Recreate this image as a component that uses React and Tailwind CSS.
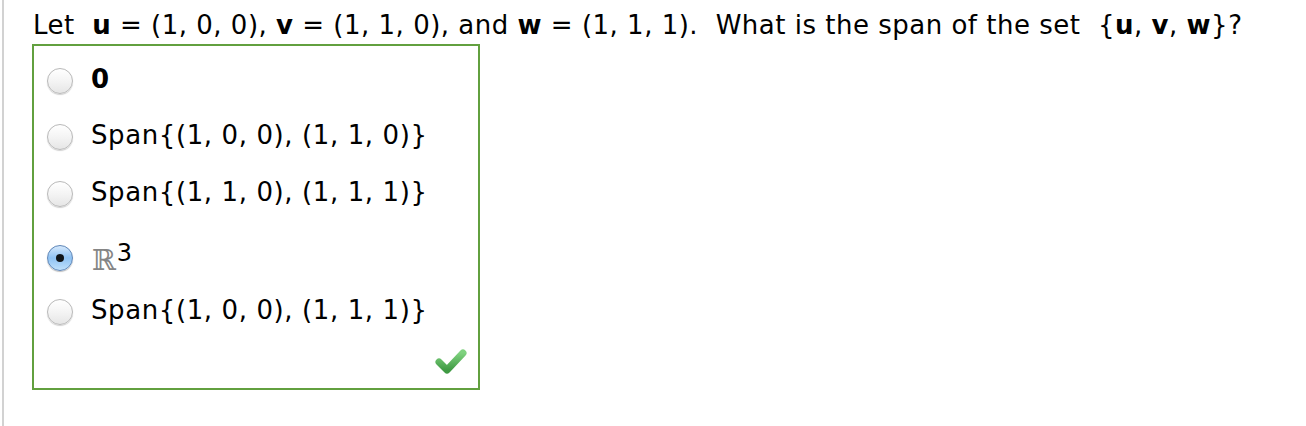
import React from "react";

const font = { fontFamily: '"DejaVu Sans", Verdana, sans-serif' };

function Radio({ checked }) {
  if (checked) {
    return (
      <span className="relative flex h-[26px] w-[26px] shrink-0 items-center justify-center rounded-full border border-[#5e86b8] bg-gradient-to-b from-[#d6e9fc] via-[#8fc2f3] to-[#bfe0fb] shadow-[0_1px_1px_rgba(0,0,0,0.25)]">
        <span className="h-[8px] w-[8px] rounded-full bg-[#101418]" />
      </span>
    );
  }
  return (
    <span className="h-[26px] w-[26px] shrink-0 rounded-full border border-[#b9b9b9] bg-gradient-to-b from-[#ffffff] via-[#f4f4f4] to-[#e6e6e6] shadow-[0_1px_1px_rgba(0,0,0,0.18)]" />
  );
}

function Option({ checked, children, className, textClass = "-mt-[4px]" }) {
  return (
    <div className={"flex items-center pl-[13px] " + className}>
      <Radio checked={checked} />
      <div className={"ml-[18px] text-[26px] leading-[30px] tracking-[0.6px] text-black whitespace-nowrap " + textClass}>{children}</div>
    </div>
  );
}

export default function App() {
  return (
    <div className="h-[426px] w-[1306px] bg-white" style={font}>
      <div className="ml-[2px] h-[426px] border-l-2 border-[#d2d2d2] pl-[28px]">
        <div className="pt-[8px] pl-[1px] text-[26px] leading-[34px] tracking-[0.5px] text-black whitespace-nowrap">
          Let&nbsp; <b>u</b> = (1, 0, 0), <b>v</b> = (1, 1, 0), and <b>w</b> = (1, 1, 1).&nbsp; What is the span of the set&nbsp; {"{"}<b>u</b>, <b>v</b>, <b>w</b>{"}"}?
        </div>
        <div className="mt-[2px] flex h-[346px] w-[448px] flex-col border-2 border-[#62a03f] pt-[7px]">
          <Option className="h-[56px]">
            <b>0</b>
          </Option>
          <Option className="h-[56px]">Span{"{"}(1, 0, 0), (1, 1, 0){"}"}</Option>
          <Option className="h-[57px]">Span{"{"}(1, 1, 0), (1, 1, 1){"}"}</Option>
          <Option checked className="h-[64px] pt-[8px]" textClass="mt-[6px]">
            <span className="ml-[1px] text-[29px] text-[#858585]" style={{ fontFamily: '"DejaVu Serif", serif' }}>ℝ</span>
            <span className="relative -top-[9px] text-[24px]">3</span>
          </Option>
          <Option className="h-[52px]">Span{"{"}(1, 0, 0), (1, 1, 1){"}"}</Option>
          <div className="mt-[9px] flex justify-end pr-[11px]">
            <svg width="32" height="28" viewBox="0 0 32 28">
              <defs>
                <linearGradient id="chk" x1="0" y1="0" x2="0" y2="1">
                  <stop offset="0" stopColor="#7fd27f" />
                  <stop offset="1" stopColor="#3f9a43" />
                </linearGradient>
              </defs>
              <path d="M4 15 L12 23 L28 6" fill="none" stroke="url(#chk)" strokeWidth="7" strokeLinecap="round" strokeLinejoin="round" />
            </svg>
          </div>
        </div>
      </div>
    </div>
  );
}
